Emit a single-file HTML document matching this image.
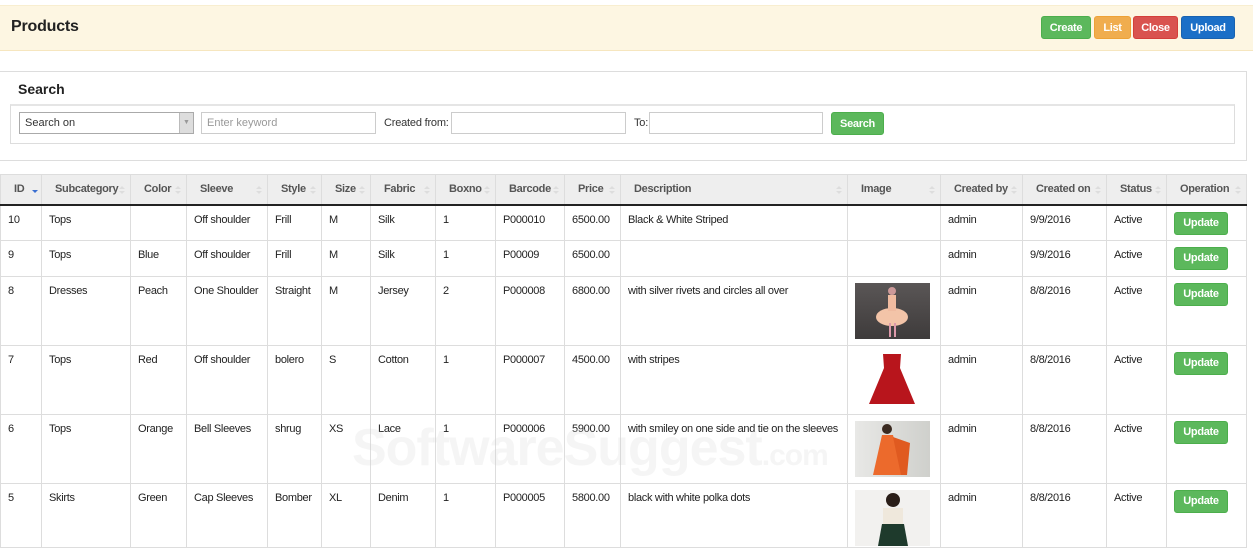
<!DOCTYPE html>
<html><head><meta charset="utf-8">
<style>
*{box-sizing:border-box;margin:0;padding:0}
body{width:1253px;height:547px;overflow:hidden;background:#fff;font-family:"Liberation Sans",sans-serif;color:#333;position:relative}
.top{position:absolute;left:0;top:5px;width:1253px;height:46px;background:#fdf6e2;border-top:1px solid #f8eed0;border-bottom:1px solid #f6e6bf}
.top h1{position:absolute;left:11px;top:12px;font-size:16px;font-weight:bold;color:#222;letter-spacing:-0.2px}
.btn{position:absolute;color:#fff;font-size:11px;font-weight:bold;text-align:center;border-radius:3px;line-height:22px;height:23px;letter-spacing:-0.3px}
.g{background:#5cb85c;border:1px solid #4cae4c}
.o{background:#f0ad4e;border:1px solid #eea236}
.r{background:#d9534f;border:1px solid #d43f3a}
.b{background:#1b6fc7;border:1px solid #1862b0}
.sbox{position:absolute;left:0;top:71px;width:1247px;height:90px;border:1px solid #ddd;border-left:none}
.sbox h2{position:absolute;left:18px;top:9px;font-size:14px;font-weight:bold;color:#222}
.inner{position:absolute;left:10px;top:32px;width:1225px;height:40px;border:1px solid #ddd;border-top:2px solid #e5e5e5}
.inp{position:absolute;height:22px;border:1px solid #ccc;background:#fff;font-size:11px;line-height:20px;padding-left:5px;color:#999}
.lbl{position:absolute;font-size:11px;color:#333;letter-spacing:-0.2px}
table{position:absolute;left:0;top:174px;border-collapse:collapse;table-layout:fixed;font-size:11px;letter-spacing:-0.3px}
th{background:#eee;height:30px;border:1px solid #ddd;border-bottom:2px solid #222;font-weight:bold;color:#555;text-align:left;padding-left:13px;position:relative}
th:after{content:"";position:absolute;right:5px;top:11px;width:0;height:0;border-left:3px solid transparent;border-right:3px solid transparent;border-bottom:3px solid #ddd}
th:before{content:"";position:absolute;right:5px;top:16px;width:0;height:0;border-left:3px solid transparent;border-right:3px solid transparent;border-top:3px solid #ddd}
th.id:after{display:none}
th.id:before{border-top-color:#3a6fd1;top:15px;right:3px}
td{border:1px solid #ddd;vertical-align:top;padding:8px 0 0 7px;color:#222;position:relative}
.up{display:inline-block;background:#5cb85c;border:1px solid #4cae4c;color:#fff;font-weight:bold;border-radius:3px;width:54px;height:23px;line-height:21px;text-align:center;margin-top:-2px;font-size:11px}
.pic{position:absolute;left:7px;top:6px;width:75px;height:56px}
.wm{position:absolute;left:352px;top:418px;font-size:52px;font-weight:bold;color:rgba(210,210,210,0.22);letter-spacing:-1px;pointer-events:none}
</style></head><body>
<div class="top"><h1>Products</h1>
<div class="btn g" style="left:1041px;top:10px;width:50px">Create</div>
<div class="btn o" style="left:1094px;top:10px;width:37px">List</div>
<div class="btn r" style="left:1133px;top:10px;width:45px">Close</div>
<div class="btn b" style="left:1181px;top:10px;width:54px">Upload</div>
</div>
<div class="sbox"><h2>Search</h2>
<div class="inner">
<div class="inp" style="left:8px;top:6px;width:175px;color:#333;border-color:#aaa">Search on<span style="position:absolute;right:0;top:0;width:14px;height:20px;background:#ddd;border-left:1px solid #bbb;font-size:7px;text-align:center;color:#999">▼</span></div>
<div class="inp" style="left:190px;top:6px;width:175px">Enter keyword</div>
<div class="lbl" style="left:373px;top:11px">Created from:</div>
<div class="inp" style="left:440px;top:6px;width:175px"></div>
<div class="lbl" style="left:623px;top:11px">To:</div>
<div class="inp" style="left:638px;top:6px;width:174px"></div>
<div class="btn g" style="left:820px;top:6px;width:53px;height:23px">Search</div>
</div></div>

<table>
<colgroup><col style="width:41px"><col style="width:89px"><col style="width:56px"><col style="width:81px"><col style="width:54px"><col style="width:49px"><col style="width:65px"><col style="width:60px"><col style="width:69px"><col style="width:56px"><col style="width:227px"><col style="width:93px"><col style="width:82px"><col style="width:84px"><col style="width:60px"><col style="width:80px"></colgroup>
<tr><th class="id">ID</th><th>Subcategory</th><th>Color</th><th>Sleeve</th><th>Style</th><th>Size</th><th>Fabric</th><th>Boxno</th><th>Barcode</th><th>Price</th><th>Description</th><th>Image</th><th>Created by</th><th>Created on</th><th>Status</th><th>Operation</th></tr>
<tr style="height:36px"><td>10</td><td>Tops</td><td></td><td>Off shoulder</td><td>Frill</td><td>M</td><td>Silk</td><td>1</td><td>P000010</td><td>6500.00</td><td>Black &amp; White Striped</td><td></td><td>admin</td><td>9/9/2016</td><td>Active</td><td><span class="up">Update</span></td></tr>
<tr style="height:36px"><td>9</td><td>Tops</td><td>Blue</td><td>Off shoulder</td><td>Frill</td><td>M</td><td>Silk</td><td>1</td><td>P00009</td><td>6500.00</td><td></td><td></td><td>admin</td><td>9/9/2016</td><td>Active</td><td><span class="up">Update</span></td></tr>
<tr style="height:69px"><td>8</td><td>Dresses</td><td>Peach</td><td>One Shoulder</td><td>Straight</td><td>M</td><td>Jersey</td><td>2</td><td>P000008</td><td>6800.00</td><td>with silver rivets and circles all over</td><td><div class="pic" style="background:linear-gradient(#5a5656,#3e3b3b)"><svg width="75" height="56"><ellipse cx="37" cy="34" rx="16" ry="9" fill="#f3c4a8"/><rect x="33" y="12" width="8" height="16" fill="#f0bba0"/><circle cx="37" cy="8" r="4" fill="#c99"/><rect x="34" y="40" width="2" height="14" fill="#d9a"/><rect x="39" y="40" width="2" height="14" fill="#d9a"/></svg></div></td><td>admin</td><td>8/8/2016</td><td>Active</td><td><span class="up">Update</span></td></tr>
<tr style="height:69px"><td>7</td><td>Tops</td><td>Red</td><td>Off shoulder</td><td>bolero</td><td>S</td><td>Cotton</td><td>1</td><td>P000007</td><td>4500.00</td><td>with stripes</td><td><div class="pic"><svg width="75" height="56"><path d="M28 2 L46 2 L45 16 L60 52 L14 52 L29 16 Z" fill="#b8151c"/></svg></div></td><td>admin</td><td>8/8/2016</td><td>Active</td><td><span class="up">Update</span></td></tr>
<tr style="height:69px"><td>6</td><td>Tops</td><td>Orange</td><td>Bell Sleeves</td><td>shrug</td><td>XS</td><td>Lace</td><td>1</td><td>P000006</td><td>5900.00</td><td>with smiley on one side and tie on the sleeves</td><td><div class="pic" style="background:linear-gradient(90deg,#e8e8e6,#cfd0cc)"><svg width="75" height="56"><circle cx="32" cy="8" r="5" fill="#3a2a20"/><path d="M27 14 L38 14 L48 54 L18 54 Z" fill="#ec6a2c"/><path d="M38 16 L55 22 L52 54 L46 54 Z" fill="#e05a20"/></svg></div></td><td>admin</td><td>8/8/2016</td><td>Active</td><td><span class="up">Update</span></td></tr>
<tr style="height:64px"><td>5</td><td>Skirts</td><td>Green</td><td>Cap Sleeves</td><td>Bomber</td><td>XL</td><td>Denim</td><td>1</td><td>P000005</td><td>5800.00</td><td>black with white polka dots</td><td><div class="pic" style="background:#f2f1ef"><svg width="75" height="56"><circle cx="38" cy="10" r="7" fill="#2a1e18"/><rect x="28" y="18" width="20" height="16" fill="#efe8dc"/><path d="M27 34 L49 34 L53 56 L23 56 Z" fill="#1e3a2c"/></svg></div></td><td>admin</td><td>8/8/2016</td><td>Active</td><td><span class="up">Update</span></td></tr>
</table>
<div class="wm">SoftwareSuggest<span style="font-size:30px">.com</span></div>
</body></html>
